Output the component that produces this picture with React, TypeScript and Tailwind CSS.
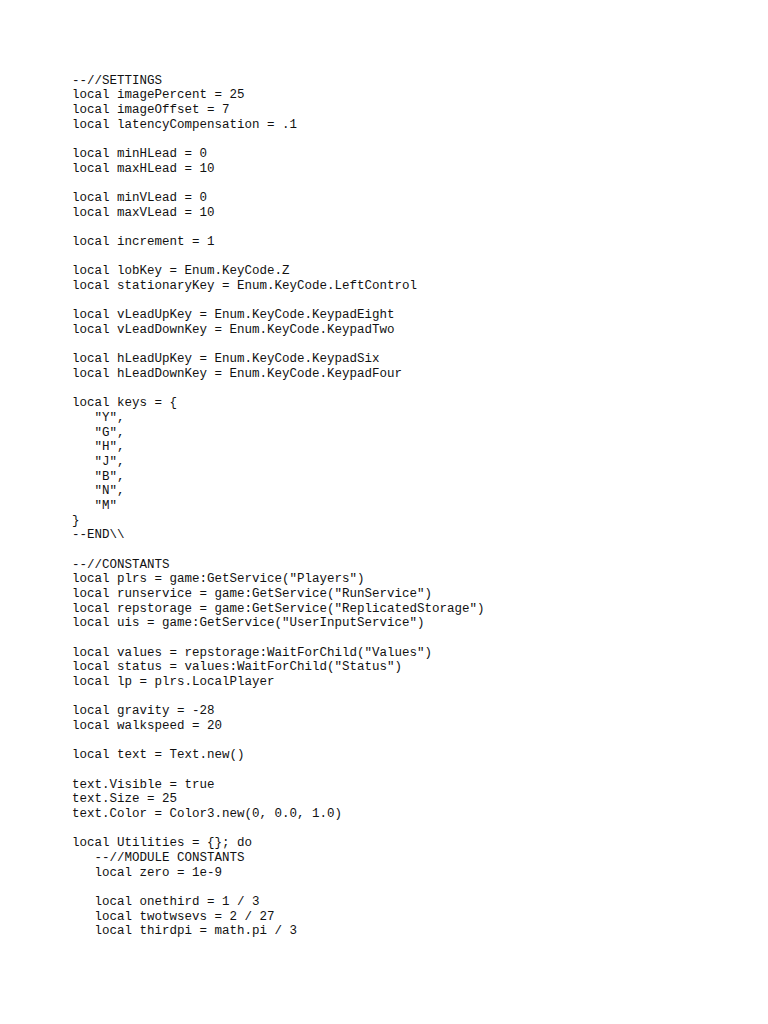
import React from 'react';

const code = `--//SETTINGS
local imagePercent = 25
local imageOffset = 7
local latencyCompensation = .1

local minHLead = 0
local maxHLead = 10

local minVLead = 0
local maxVLead = 10

local increment = 1

local lobKey = Enum.KeyCode.Z
local stationaryKey = Enum.KeyCode.LeftControl

local vLeadUpKey = Enum.KeyCode.KeypadEight
local vLeadDownKey = Enum.KeyCode.KeypadTwo

local hLeadUpKey = Enum.KeyCode.KeypadSix
local hLeadDownKey = Enum.KeyCode.KeypadFour

local keys = {
   "Y",
   "G",
   "H",
   "J",
   "B",
   "N",
   "M"
}
--END\\\\

--//CONSTANTS
local plrs = game:GetService("Players")
local runservice = game:GetService("RunService")
local repstorage = game:GetService("ReplicatedStorage")
local uis = game:GetService("UserInputService")

local values = repstorage:WaitForChild("Values")
local status = values:WaitForChild("Status")
local lp = plrs.LocalPlayer

local gravity = -28
local walkspeed = 20

local text = Text.new()

text.Visible = true
text.Size = 25
text.Color = Color3.new(0, 0.0, 1.0)

local Utilities = {}; do
   --//MODULE CONSTANTS
   local zero = 1e-9

   local onethird = 1 / 3
   local twotwsevs = 2 / 27
   local thirdpi = math.pi / 3`;

export default function App() {
  return (
    <div className="w-[768px] h-[1024px] bg-white overflow-hidden">
      <pre className="pt-[73.5px] pl-[72px] m-0 whitespace-pre text-[12.5px] leading-[14.67px] text-[#111] font-['Liberation_Mono',monospace]">
        {code}
      </pre>
    </div>
  );
}
